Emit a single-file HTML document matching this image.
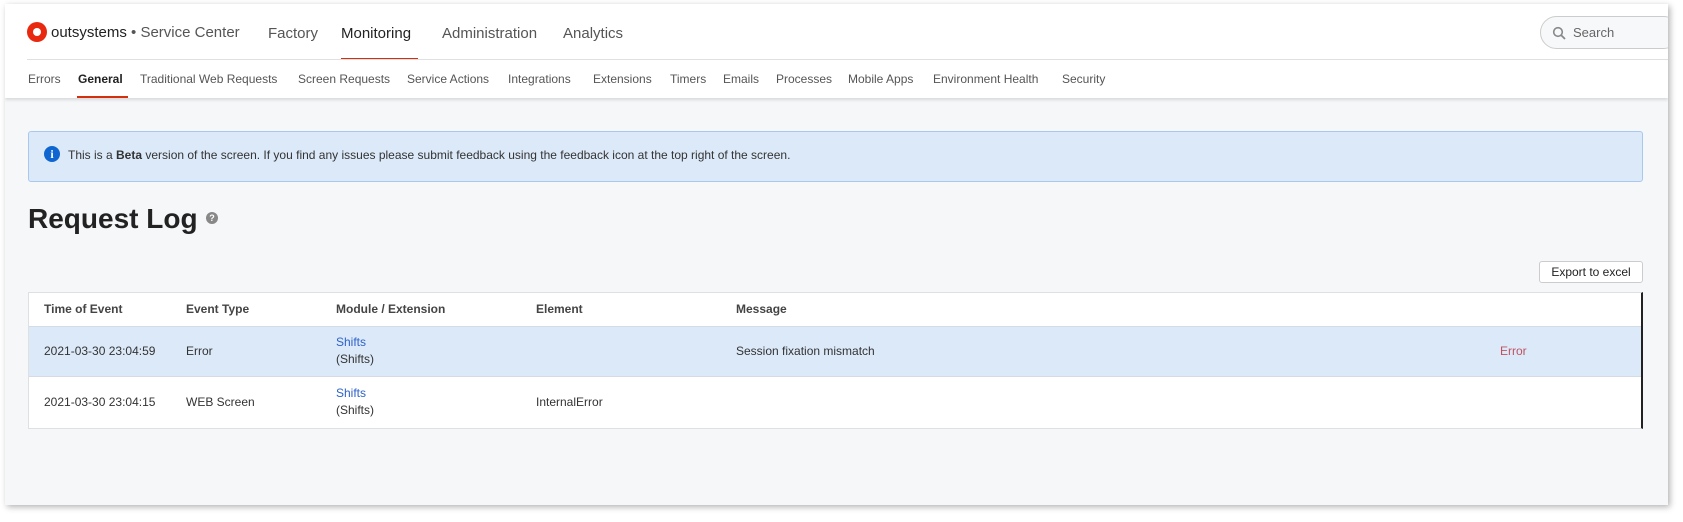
<!DOCTYPE html>
<html><head><meta charset="utf-8"><style>
*{box-sizing:border-box;margin:0;padding:0}
body{width:1683px;height:522px;background:#fff;font-family:"Liberation Sans",sans-serif;position:relative;overflow:hidden;color:#333}
.card{position:absolute;left:5px;top:4px;width:1663px;height:501px;background:#f6f7f9;box-shadow:2px 2px 6px rgba(0,0,0,.3);overflow:hidden}
.hdr{position:absolute;left:0;top:0;width:100%;height:94px;background:#fff;box-shadow:0 2px 3px rgba(0,0,0,.12)}
.abs{position:absolute;white-space:nowrap}
.nav{font-size:15px;color:#555;top:21px}
.sub{font-size:12px;color:#555;top:68px}
.tbl{position:absolute;left:23px;top:288px;width:1615px;height:137px;background:#fff;border:1px solid #dde0e4;border-right:2px solid #222}
.td{position:absolute;font-size:12px;color:#333;white-space:nowrap}
</style></head><body>
<div class="card">
 <div class="hdr">
  <div class="abs" style="left:22px;top:18px;width:20px;height:20px;border-radius:50%;background:#e8290f"></div>
  <div class="abs" style="left:28px;top:24px;width:8px;height:8px;border-radius:50%;background:#fff"></div>
  <div class="abs" style="left:46px;top:20px;font-size:15px;color:#222">outsystems <span style="color:#555">• Service Center</span></div>
  <div class="abs nav" style="left:263px">Factory</div>
  <div class="abs nav" style="left:336px;color:#222">Monitoring</div>
  <div class="abs nav" style="left:437px">Administration</div>
  <div class="abs nav" style="left:558px">Analytics</div>
  <div class="abs" style="left:336px;top:54px;width:77px;height:2px;background:#d2300f"></div>
  <div class="abs" style="left:22px;top:55px;width:1641px;height:1px;background:#e0e0e0"></div>
  <div class="abs" style="left:1535px;top:12px;width:140px;height:33px;border:1px solid #ccc;border-radius:17px;background:#f7f8f9"></div>
  <svg class="abs" style="left:1547px;top:22px" width="14" height="14" viewBox="0 0 14 14"><circle cx="6" cy="6" r="4.3" fill="none" stroke="#888" stroke-width="1.6"/><path d="M9 9l4 4" stroke="#888" stroke-width="1.8"/></svg>
  <div class="abs" style="left:1568px;top:21px;font-size:13px;color:#666">Search</div>
  <div class="abs sub" style="left:23px">Errors</div>
  <div class="abs sub" style="left:73px;color:#222;font-weight:bold">General</div>
  <div class="abs sub" style="left:135px">Traditional Web Requests</div>
  <div class="abs sub" style="left:293px">Screen Requests</div>
  <div class="abs sub" style="left:402px">Service Actions</div>
  <div class="abs sub" style="left:503px">Integrations</div>
  <div class="abs sub" style="left:588px">Extensions</div>
  <div class="abs sub" style="left:665px">Timers</div>
  <div class="abs sub" style="left:718px">Emails</div>
  <div class="abs sub" style="left:771px">Processes</div>
  <div class="abs sub" style="left:843px">Mobile Apps</div>
  <div class="abs sub" style="left:928px">Environment Health</div>
  <div class="abs sub" style="left:1057px">Security</div>
  <div class="abs" style="left:72px;top:92px;width:51px;height:2px;background:#d2300f"></div>
 </div>
 <div class="abs" style="left:23px;top:127px;width:1615px;height:51px;background:#dce9f9;border:1px solid #a9c8ef;border-radius:3px"></div>
 <div class="abs" style="left:39px;top:142px;width:16px;height:16px;border-radius:50%;background:#1066d0;color:#fff;font-size:12px;font-weight:bold;text-align:center;line-height:16px;font-family:'Liberation Serif',serif">i</div>
 <div class="abs" style="left:63px;top:144px;font-size:12px;color:#333">This is a <b>Beta</b> version of the screen. If you find any issues please submit feedback using the feedback icon at the top right of the screen.</div>
 <div class="abs" style="left:23px;top:199px;font-size:28px;font-weight:bold;color:#222">Request Log</div>
 <div class="abs" style="left:201px;top:208px;width:12px;height:12px;border-radius:50%;background:#888;color:#fff;font-size:9px;font-weight:bold;text-align:center;line-height:12px">?</div>
 <div class="abs" style="left:1534px;top:257px;width:104px;height:22px;border:1px solid #ccc;border-radius:3px;background:#fff;font-size:12px;color:#222;text-align:center;line-height:20px">Export to excel</div>
 <div class="tbl">
  <div class="td" style="left:15px;top:9px;font-weight:bold;color:#444">Time of Event</div>
  <div class="td" style="left:157px;top:9px;font-weight:bold;color:#444">Event Type</div>
  <div class="td" style="left:307px;top:9px;font-weight:bold;color:#444">Module / Extension</div>
  <div class="td" style="left:507px;top:9px;font-weight:bold;color:#444">Element</div>
  <div class="td" style="left:707px;top:9px;font-weight:bold;color:#444">Message</div>
  <div style="position:absolute;left:0;top:33px;width:100%;height:51px;background:#dce9f9;border-top:1px solid #d3dbe5;border-bottom:1px solid #d3dbe5"></div>
  <div class="td" style="left:15px;top:51px">2021-03-30 23:04:59</div>
  <div class="td" style="left:157px;top:51px">Error</div>
  <div class="td" style="left:307px;top:42px;color:#2e62c9">Shifts</div>
  <div class="td" style="left:307px;top:59px">(Shifts)</div>
  <div class="td" style="left:707px;top:51px">Session fixation mismatch</div>
  <div class="td" style="left:1471px;top:51px;color:#c0525e">Error</div>
  <div class="td" style="left:15px;top:102px">2021-03-30 23:04:15</div>
  <div class="td" style="left:157px;top:102px">WEB Screen</div>
  <div class="td" style="left:307px;top:93px;color:#2e62c9">Shifts</div>
  <div class="td" style="left:307px;top:110px">(Shifts)</div>
  <div class="td" style="left:507px;top:102px">InternalError</div>
 </div>
</div>
</body></html>
